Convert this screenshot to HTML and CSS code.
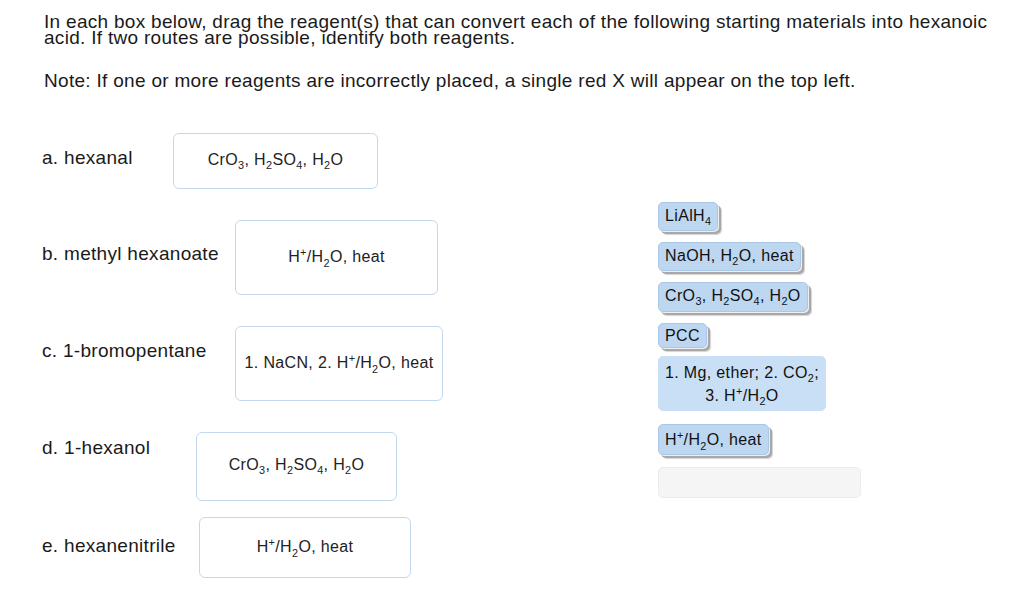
FILE: index.html
```html
<!DOCTYPE html>
<html lang="en">
<head>
  <meta charset="UTF-8">
  <meta name="viewport" content="width=device-width, initial-scale=1.0">
  <title>Hexanoic Acid - Reagent Drag and Drop</title>
  <link rel="stylesheet" href="styles.css">
</head>
<body>

  <div class="question">
    <div class="intro">
      <p>In each box below, drag the reagent(s) that can convert each of the following starting materials into hexanoic acid. If two routes are possible, identify both reagents.</p>
      <p class="note">Note: If one or more reagents are incorrectly placed, a single red X will appear on the top left.</p>
    </div>

    <div class="workspace">
      <!-- Starting materials with their drop targets -->
      <div class="targets">
        <div class="target-row row-a">
          <div class="label">a. hexanal</div>
          <div class="drop-box"><span>CrO<sub>3</sub>, H<sub>2</sub>SO<sub>4</sub>, H<sub>2</sub>O</span></div>
        </div>
        <div class="target-row row-b">
          <div class="label">b. methyl hexanoate</div>
          <div class="drop-box"><span>H<sup>+</sup>/H<sub>2</sub>O, heat</span></div>
        </div>
        <div class="target-row row-c">
          <div class="label">c. 1-bromopentane</div>
          <div class="drop-box"><span>1. NaCN, 2. H<sup>+</sup>/H<sub>2</sub>O, heat</span></div>
        </div>
        <div class="target-row row-d">
          <div class="label">d. 1-hexanol</div>
          <div class="drop-box"><span>CrO<sub>3</sub>, H<sub>2</sub>SO<sub>4</sub>, H<sub>2</sub>O</span></div>
        </div>
        <div class="target-row row-e">
          <div class="label">e. hexanenitrile</div>
          <div class="drop-box"><span>H<sup>+</sup>/H<sub>2</sub>O, heat</span></div>
        </div>
      </div>

      <!-- Reagent bank -->
      <div class="bank">
        <div class="chip">LiAlH<sub>4</sub></div>
        <div class="chip">NaOH, H<sub>2</sub>O, heat</div>
        <div class="chip">CrO<sub>3</sub>, H<sub>2</sub>SO<sub>4</sub>, H<sub>2</sub>O</div>
        <div class="chip chip-short">PCC</div>
        <div class="chip chip-flat">1. Mg, ether; 2. CO<sub>2</sub>;<br>3. H<sup>+</sup>/H<sub>2</sub>O</div>
        <div class="chip">H<sup>+</sup>/H<sub>2</sub>O, heat</div>
        <div class="empty-slot"></div>
      </div>
    </div>
  </div>

</body>
</html>
```

FILE: styles.css
```css
body {
  font-family: "Liberation Sans", Arial, sans-serif;
  margin: 0;
  padding: 0;
  background-color: #fff;
  color: #1a1a1a;
}

.question {
  padding: 14px 0 0 44px;
}

.intro p {
  margin: 0;
  font-size: 19px;
  line-height: 16px;
  letter-spacing: 0.3px;
  width: 960px;
}

.intro .note {
  margin-top: 27px;
}

sub,
sup {
  font-size: 68%;
}

.workspace {
  display: flex;
  margin-top: 44px;
  margin-left: -2px;
}

/* left side: starting materials */
.targets {
  width: 616px;
  display: flex;
  flex-direction: column;
}

.target-row {
  display: flex;
  align-items: flex-start;
  margin-bottom: 31px;
}

.target-row .label {
  font-size: 19px;
  line-height: 20px;
  letter-spacing: 0.3px;
}

.drop-box {
  display: flex;
  align-items: center;
  justify-content: center;
  box-sizing: border-box;
  border: 1px solid #c3d8ef;
  border-radius: 6px;
  font-size: 16px;
  letter-spacing: 0.35px;
  color: #222;
  white-space: nowrap;
}

.row-a .label { width: 131px; padding-top: 15px; }
.row-a .drop-box { width: 205px; height: 56px; }

.row-b .label { width: 193px; padding-top: 24px; }
.row-b .drop-box { width: 203px; height: 75px; }

.row-c .label { width: 193px; padding-top: 15px; }
.row-c .drop-box { width: 208px; height: 75px; }

.row-d { margin-bottom: 16px; }
.row-d .label { width: 154px; padding-top: 6px; }
.row-d .drop-box { width: 201px; height: 69px; }

.row-e .label { width: 157px; padding-top: 19px; }
.row-e .drop-box { width: 212px; height: 61px; }

/* right side: reagent bank */
.bank {
  display: flex;
  flex-direction: column;
  align-items: flex-start;
  padding-top: 69px;
}

.chip {
  background-color: #bdd7f1;
  border: 1px solid #aac7e6;
  border-radius: 5px;
  padding: 4px 6px 3px;
  font-size: 16px;
  letter-spacing: 0.35px;
  color: #111;
  margin-bottom: 11px;
  box-shadow: 1px 1px 0 #eeeeee, 3px 3px 0 #a8a8a8, 4px 4px 1px #d4d4d4;
}

.chip-short {
  padding: 3px 6px 2px;
  margin-bottom: 8px;
}

.chip-flat {
  background-color: #c9dff5;
  border-color: #c9dff5;
  box-shadow: none;
  text-align: center;
  line-height: 23px;
  padding: 4px 6px 3px;
  margin-bottom: 13px;
}

.chip-flat sub,
.chip-flat sup {
  line-height: 0;
}

.empty-slot {
  width: 203px;
  height: 31px;
  margin-top: 1px;
  box-sizing: border-box;
  background-color: #f5f5f5;
  border: 1px solid #ececec;
  border-radius: 5px;
}
```
